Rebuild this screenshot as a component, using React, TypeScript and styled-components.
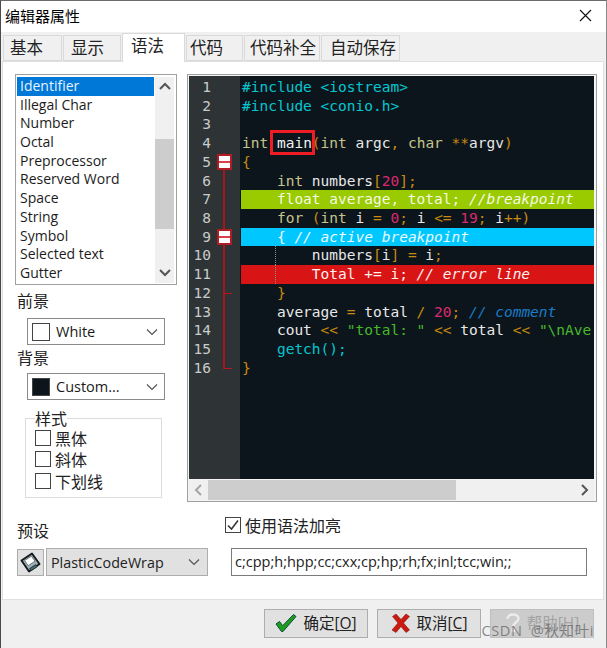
import React from "react";
import styled, { createGlobalStyle } from "styled-components";

const Global = createGlobalStyle`
  html, body { margin: 0; padding: 0; background: #fff; }
  * { box-sizing: border-box; }
`;

const UI_FONT = `"Open Sans", "Noto Sans", "Noto Sans CJK SC", sans-serif`;
const CJK_FONT = `"Noto Sans CJK SC", "Noto Sans", sans-serif`;

const Window = styled.div`
  width: 607px;
  height: 648px;
  display: flex;
  flex-direction: column;
  background: #f0f0f0;
  font-family: ${UI_FONT};
  color: #1a1a1a;
  border-left: 1px solid #4a4a4a;
  border-right: 1px solid #8a8a8a;
  border-top: 1px solid #6a6a6a;
  overflow: hidden;
  position: relative;
`;
const TitleBar = styled.div`
  height: 31px;
  flex: none;
  background: #fff;
  display: flex;
  align-items: center;
  justify-content: space-between;
  padding: 0 14px 2px 4px;
  font: 15px ${CJK_FONT};
  color: #000;
`;
const TabStrip = styled.div`
  height: 29px;
  flex: none;
  background: #f0f0f0;
  display: flex;
  align-items: flex-end;
  padding-left: 2px;
  gap: 1px;
`;
const Tab = styled.div<{ $w: number; $pad: number; $active?: boolean }>`
  width: ${(p) => p.$w}px;
  height: ${(p) => (p.$active ? 29 : 26)}px;
  background: ${(p) => (p.$active ? "#fff" : "#f0f0f0")};
  border: 1px solid #d9d9d9;
  border-bottom: ${(p) => (p.$active ? "none" : "1px solid #d9d9d9")};
  display: flex;
  align-items: center;
  padding: 0 0 ${(p) => (p.$active ? 7 : 3)}px ${(p) => p.$pad}px;
  font: 16.5px ${CJK_FONT};
  color: #222;
  white-space: nowrap;
  margin-bottom: ${(p) => (p.$active ? -1 : 0)}px;
  position: relative;
  z-index: ${(p) => (p.$active ? 1 : 0)};
`;
const Panel = styled.div`
  width: 602px;
  height: 539px;
  flex: none;
  margin-left: 1px;
  background: #fff;
  border: 1px solid #e0e0e0;
  padding: 12px 6px 0 12px;
  display: grid;
  grid-template-columns: 162px 410px;
  column-gap: 10px;
  grid-template-rows: 428px auto;
`;
const LeftColumn = styled.div`
  display: flex;
  flex-direction: column;
`;
const ListFrame = styled.div`
  width: 162px;
  height: 211px;
  flex: none;
  border: 1px solid #a0a0a0;
  display: flex;
  padding: 2px 2px 1px 1px;
`;
const ListItems = styled.div`
  width: 137px;
  flex: none;
  overflow: hidden;
`;
const ListItem = styled.div<{ $selected?: boolean }>`
  height: 18.7px;
  line-height: 18.7px;
  font-size: 14px;
  padding-left: 3px;
  color: ${(p) => (p.$selected ? "#e8f2ff" : "#1c1c1c")};
  background: ${(p) => (p.$selected ? "#0078d7" : "transparent")};
  white-space: nowrap;
`;
const VScroll = styled.div`
  width: 19px;
  margin-left: 1px;
  background: #f0f0f0;
  display: flex;
  flex-direction: column;
  align-items: stretch;
`;
const ScrollArrow = styled.div`
  flex: none;
  display: flex;
  align-items: center;
  justify-content: center;
  width: 19px;
  height: 20px;
`;
const VSpacer = styled.div<{ $h: number }>`
  height: ${(p) => p.$h}px;
  flex: none;
`;
const VThumb = styled.div`
  height: 90px;
  flex: none;
  background: #cdcdcd;
`;
const FieldLabel = styled.div<{ $top: number }>`
  font: 16px/20px ${CJK_FONT};
  margin-top: ${(p) => p.$top}px;
  margin-left: 2px;
  color: #222;
`;
const ColorSelect = styled.div<{ $top: number }>`
  width: 138px;
  height: 27px;
  margin: ${(p) => p.$top}px 0 0 12px;
  border: 1px solid #8a8a8a;
  background: #fff;
  display: flex;
  align-items: center;
  padding: 0 6px 0 4px;
  font-size: 14.5px;
  gap: 6px;
`;
const Swatch = styled.span<{ $c: string }>`
  width: 18px;
  height: 18px;
  flex: none;
  background: ${(p) => p.$c};
  border: 1px solid #444;
`;
const Grow = styled.span`
  flex: 1;
`;
const GroupBox = styled.fieldset`
  width: 137px;
  height: 87px;
  margin: 11px 0 0 10px;
  padding: 1px 0 0 9px;
  border: 1px solid #dcdcdc;
  position: relative;
`;
const GroupTitle = styled.legend`
  font: 16px/15px ${CJK_FONT};
  padding: 0;
  background: #fff;
  color: #222;
  height: 15px;
`;
const CheckRow = styled.div`
  display: flex;
  align-items: center;
  gap: 4px;
  height: 21.5px;
  font: 16px/20px ${CJK_FONT};
  color: #222;
`;
const CheckBox = styled.span`
  width: 16px;
  height: 16px;
  flex: none;
  border: 1px solid #444;
  background: #fff;
  display: flex;
  align-items: center;
  justify-content: center;
`;
const EditorFrame = styled.div`
  width: 410px;
  height: 428px;
  border: 1px solid #a0a0a0;
  padding: 1px 2px 1px 1px;
  display: flex;
  flex-direction: column;
  background: #f4f4f4;
`;
const CodeArea = styled.div`
  height: 403px;
  flex: none;
  background: #0c151c;
  padding-top: 2px;
  overflow: hidden;
  position: relative;
  display: flex;
  flex-direction: column;
`;
const GutterFill = styled.div`
  flex: 1;
  width: 51px;
  background: #2e3436;
`;
const GutterCap = styled.div`
  position: absolute;
  left: 0;
  top: 0;
  width: 51px;
  height: 2px;
  background: #2e3436;
`;
const CodeRow = styled.div`
  display: flex;
  height: 18.73px;
  flex: none;
`;
const Gutter = styled.div`
  width: 51px;
  flex: none;
  background: #2e3436;
  display: flex;
  font: 14.5px/18.73px "DejaVu Sans Mono", monospace;
  color: #c9cccc;
`;
const LineNo = styled.span`
  width: 22px;
  text-align: right;
  flex: none;
`;
const FoldCell = styled.span`
  width: 29px;
  position: relative;
  flex: none;
`;
const FoldBox = styled.span`
  position: absolute;
  left: 6px;
  top: 1px;
  width: 15px;
  height: 16px;
  background: #fff;
  border: 2px solid #b01c24;
  z-index: 1;
  &::after {
    content: "";
    position: absolute;
    left: 0;
    right: 0;
    top: 5px;
    height: 2px;
    background: #d8404a;
  }
`;
const FoldLine = styled.span<{ $half?: boolean }>`
  position: absolute;
  left: 12px;
  top: 0;
  width: 2px;
  height: ${(p) => (p.$half ? "10px" : "100%")};
  background: #a8141c;
`;
const FoldTick = styled.span`
  position: absolute;
  left: 13px;
  top: 9px;
  width: 8px;
  height: 1px;
  background: #b8161e;
`;
const CodeText = styled.div<{ $bg?: string }>`
  flex: 1;
  margin-left: 1px;
  padding-left: 1px;
  white-space: pre;
  font: 14.5px/18.73px "DejaVu Sans Mono", monospace;
  background: ${(p) => p.$bg ?? "transparent"};
  color: #e8e8e8;
  position: relative;
  overflow: hidden;
`;
const CodeTextOpen = styled(CodeText)`
  overflow: visible;
`;
const Guide = styled.span`
  position: absolute;
  left: 34px;
  top: 0;
  bottom: 0;
  border-left: 1px dotted #8a8f92;
`;
const MainWord = styled.span`
  position: relative;
  color: #f2f2f2;
`;
const RedBox = styled.span`
  position: absolute;
  left: -7px;
  top: -5px;
  width: 45px;
  height: 25px;
  border: 3px solid #ee1c25;
  pointer-events: none;
  z-index: 3;
`;
const Tok = styled.span<{ $c: string; $i?: boolean }>`
  color: ${(p) => p.$c};
  font-style: ${(p) => (p.$i ? "italic" : "normal")};
`;
const HScroll = styled.div`
  height: 20px;
  flex: none;
  background: #f0f0f0;
  display: flex;
  margin-top: 1px;
`;
const HThumb = styled.div`
  width: 248px;
  background: #cdcdcd;
`;
const BottomGrid = styled.div`
  grid-column: 1 / 3;
  display: grid;
  grid-template-columns: 216px 1fr;
  padding-top: 14px;
`;
const PresetCol = styled.div`
  display: flex;
  flex-direction: column;
  padding-left: 2px;
`;
const PresetLabel = styled.div`
  font: 16px/20px ${CJK_FONT};
  color: #222;
  margin-top: 4px;
  height: 28px;
`;
const PresetRow = styled.div`
  display: flex;
  gap: 2px;
`;
const IconBtn = styled.div`
  width: 27px;
  height: 27px;
  background: #e1e1e1;
  border: 1px solid #adadad;
  display: flex;
  align-items: center;
  justify-content: center;
  margin-top: 1px;
`;
const PresetSelect = styled.div`
  width: 162px;
  height: 28px;
  background: #e1e1e1;
  border: 1px solid #adadad;
  display: flex;
  align-items: center;
  padding: 0 7px 0 4px;
  font-size: 14.3px;
  color: #222;
`;
const RightCol = styled.div`
  display: flex;
  flex-direction: column;
`;
const HighlightRow = styled.div`
  display: flex;
  align-items: center;
  gap: 4px;
  height: 20px;
  font: 16px/20px ${CJK_FONT};
  color: #222;
  margin-left: -6px;
  margin-top: -1px;
`;
const ExtInput = styled.div`
  width: 356px;
  height: 28px;
  margin-top: 13px;
  border: 1px solid #7a7a7a;
  background: #fff;
  font-size: 14.5px;
  line-height: 26px;
  padding-left: 3px;
  color: #222;
  white-space: nowrap;
`;
const Footer = styled.div`
  flex: 1;
  display: flex;
  justify-content: flex-end;
  gap: 9px;
  padding: 9px 12px 0 0;
  background: #f0f0f0;
`;
const FootButton = styled.div<{ $disabled?: boolean }>`
  width: 104px;
  height: 29px;
  background: ${(p) => (p.$disabled ? "#cccccc" : "#e1e1e1")};
  border: 1px solid ${(p) => (p.$disabled ? "#bfbfbf" : "#adadad")};
  display: flex;
  align-items: center;
  justify-content: center;
  gap: 6px;
  padding-bottom: 2px;
  font: 15.5px ${UI_FONT};
  color: ${(p) => (p.$disabled ? "#a2a2a2" : "#222")};
  white-space: pre;
`;
const Watermark = styled.div`
  position: absolute;
  right: 12px;
  bottom: 8px;
  font: 14.5px ${UI_FONT};
  letter-spacing: 0.6px;
  word-spacing: 4px;
  color: rgba(100, 100, 100, 0.75);
  white-space: nowrap;
`;

const KW = "#c6c48a";
const OR = "#c88a10";
const NUM = "#dc2a6e";
const CY = "#06c6d0";
const GR = "#46b82a";
const BL = "#1a7cc4";

const Chevron = ({ dir }: { dir: "up" | "down" | "left" | "right" }) => {
  const d = { up: "M1 8l5-5 5 5", down: "M1 3l5 5 5-5", left: "M8 1L3 6l5 5", right: "M3 1l5 5-5 5" }[dir];
  return (
    <svg width="12" height="12" viewBox="0 0 12 12" fill="none" stroke={dir === "left" ? "#a6a6a6" : "#555"} strokeWidth="2">
      <path d={d} />
    </svg>
  );
};
const ComboArrow = () => (
  <svg width="12" height="8" viewBox="0 0 12 8" fill="none" stroke="#555" strokeWidth="1.2">
    <path d="M1 1.5l5 5 5-5" />
  </svg>
);
const CheckMark = () => (
  <svg width="14" height="14" viewBox="0 0 14 14" fill="none" stroke="#333" strokeWidth="1.5">
    <path d="M2 7.5l3.5 3.5L12 2.5" />
  </svg>
);
const Floppy = () => (
  <svg width="21" height="21" viewBox="0 0 21 21">
    <path d="M1.5 8.5L12 1.5l7.5 10.5L9 19.5z" fill="#9fb0b6" stroke="#14191c" strokeWidth="1.9" strokeLinejoin="round" />
    <path d="M4.6 8.6l6.8-4.4 3.6 5-6.8 4.4z" fill="#fff" stroke="#4c565c" strokeWidth="0.7" />
    <path d="M9.6 16.6l6-4 1.6 2.1-6 4z" fill="#46666e" stroke="#1c2a30" strokeWidth="0.8" />
  </svg>
);
const GreenCheck = () => (
  <svg width="22" height="20" viewBox="0 0 22 20">
    <path d="M1 11l3.5-2.5 3.2 4.2L18.5 1.5 21 3.5 8 18.5h-1.5z" fill="#1d9e1d" stroke="#0b4a3a" strokeWidth="1" />
  </svg>
);
const RedX = () => (
  <svg width="20" height="20" viewBox="0 0 20 20">
    <path d="M1.5 3.5L5 1l5 5.5L15 1l3.5 2.5L12.5 10l6 7-3.5 2.5-5-6-5 6L1 17l6-7z" fill="#cc1a10" stroke="#7a1a10" strokeWidth="0.6" />
  </svg>
);
const GhostHelp = () => (
  <svg width="16" height="20" viewBox="0 0 16 20" fill="none" stroke="#ececec" strokeWidth="2.4">
    <path d="M2.5 6C2.5 3 5 1.5 8 1.5s5.5 1.5 5.5 4.2c0 3.4-5 3.6-5 7.3" />
    <circle cx="8.5" cy="17" r="1.2" />
  </svg>
);

type Row = { fold?: "box" | "line" | "tick" | "end"; bg?: string; guide?: boolean; code: React.ReactNode };

const rows: Row[] = [
  { code: <Tok $c={CY}>#include &lt;iostream&gt;</Tok> },
  { code: <Tok $c={CY}>#include &lt;conio.h&gt;</Tok> },
  { code: " " },
  {
    code: (
      <>
        <Tok $c={KW}>int</Tok>{" "}
        <MainWord>
          main
          <RedBox />
        </MainWord>
        <Tok $c={OR}>(</Tok>
        <Tok $c={KW}>int</Tok> argc<Tok $c={OR}>,</Tok> <Tok $c={KW}>char</Tok> <Tok $c={OR}>**</Tok>argv
        <Tok $c={OR}>)</Tok>
      </>
    ),
  },
  { fold: "box", code: <Tok $c={OR}>{"{"}</Tok> },
  {
    fold: "line",
    code: (
      <>
        {"    "}
        <Tok $c={KW}>int</Tok> numbers<Tok $c={OR}>[</Tok>
        <Tok $c={NUM}>20</Tok>
        <Tok $c={OR}>];</Tok>
      </>
    ),
  },
  {
    fold: "line",
    bg: "#9aca00",
    code: (
      <Tok $c="#f4f8e4">
        {"    float average, total; "}
        <Tok $c="#f4f8e4" $i>//breakpoint</Tok>
      </Tok>
    ),
  },
  {
    fold: "line",
    code: (
      <>
        {"    "}
        <Tok $c={KW}>for</Tok> <Tok $c={OR}>(</Tok>
        <Tok $c={KW}>int</Tok> i <Tok $c={OR}>=</Tok> <Tok $c={NUM}>0</Tok>
        <Tok $c={OR}>;</Tok> i <Tok $c={OR}>&lt;=</Tok> <Tok $c={NUM}>19</Tok>
        <Tok $c={OR}>;</Tok> i<Tok $c={OR}>++)</Tok>
      </>
    ),
  },
  {
    fold: "box",
    bg: "#00c8ff",
    code: (
      <Tok $c="#eafaff">
        {"    { "}
        <Tok $c="#eafaff" $i>// active breakpoint</Tok>
      </Tok>
    ),
  },
  {
    fold: "line",
    guide: true,
    code: (
      <>
        {"        numbers"}
        <Tok $c={OR}>[</Tok>i<Tok $c={OR}>]</Tok> <Tok $c={OR}>=</Tok> i<Tok $c={OR}>;</Tok>
      </>
    ),
  },
  {
    fold: "line",
    guide: true,
    bg: "#d81414",
    code: (
      <Tok $c="#fff0f0">
        {"        Total += i; "}
        <Tok $c="#fff0f0" $i>// error line</Tok>
      </Tok>
    ),
  },
  { fold: "tick", code: <>{"    "}<Tok $c={OR}>{"}"}</Tok></> },
  {
    fold: "line",
    code: (
      <>
        {"    average "}
        <Tok $c={OR}>=</Tok> total <Tok $c={OR}>/</Tok> <Tok $c={NUM}>20</Tok>
        <Tok $c={OR}>;</Tok> <Tok $c={BL} $i>// comment</Tok>
      </>
    ),
  },
  {
    fold: "line",
    code: (
      <>
        {"    cout "}
        <Tok $c={OR}>&lt;&lt;</Tok> <Tok $c={GR}>"total: "</Tok> <Tok $c={OR}>&lt;&lt;</Tok> total{" "}
        <Tok $c={OR}>&lt;&lt;</Tok> <Tok $c={GR}>"\nAve</Tok>
      </>
    ),
  },
  { fold: "line", code: <>{"    "}<Tok $c={CY}>getch();</Tok></> },
  { fold: "end", code: <Tok $c={OR}>{"}"}</Tok> },
];

const listItems = ["Identifier", "Illegal Char", "Number", "Octal", "Preprocessor", "Reserved Word", "Space", "String", "Symbol", "Selected text", "Gutter"];
const tabs: { t: string; w: number; pad: number; a?: boolean }[] = [
  { t: "基本", w: 59, pad: 6 },
  { t: "显示", w: 58, pad: 7 },
  { t: "语法", w: 63, pad: 8, a: true },
  { t: "代码", w: 57, pad: 3 },
  { t: "代码补全", w: 76, pad: 5 },
  { t: "自动保存", w: 79, pad: 8 },
];

export default function App() {
  return (
    <Window>
      <Global />
      <TitleBar>
        <span>编辑器属性</span>
        <svg width="13" height="13" viewBox="0 0 13 13" stroke="#111" strokeWidth="1.1">
          <path d="M1 1l11 11M12 1L1 12" />
        </svg>
      </TitleBar>
      <TabStrip>
        {tabs.map((x) => (
          <Tab key={x.t} $w={x.w} $pad={x.pad} $active={x.a}>{x.t}</Tab>
        ))}
      </TabStrip>
      <Panel>
        <LeftColumn>
          <ListFrame>
            <ListItems>
              {listItems.map((l, i) => (
                <ListItem key={l} $selected={i === 0}>{l}</ListItem>
              ))}
            </ListItems>
            <VScroll>
              <ScrollArrow><Chevron dir="up" /></ScrollArrow>
              <VSpacer $h={42} />
              <VThumb />
              <Grow />
              <ScrollArrow><Chevron dir="down" /></ScrollArrow>
            </VScroll>
          </ListFrame>
          <FieldLabel $top={5}>前景</FieldLabel>
          <ColorSelect $top={8}>
            <Swatch $c="#fff" />
            <span>White</span>
            <Grow />
            <ComboArrow />
          </ColorSelect>
          <FieldLabel $top={2}>背景</FieldLabel>
          <ColorSelect $top={6}>
            <Swatch $c="#0c151c" />
            <span>Custom...</span>
            <Grow />
            <ComboArrow />
          </ColorSelect>
          <GroupBox>
            <GroupTitle>样式</GroupTitle>
            <CheckRow><CheckBox />黑体</CheckRow>
            <CheckRow><CheckBox />斜体</CheckRow>
            <CheckRow><CheckBox />下划线</CheckRow>
          </GroupBox>
        </LeftColumn>
        <EditorFrame>
          <CodeArea>
            <GutterCap />
            {rows.map((r, i) => {
              const Text = i === 3 ? CodeTextOpen : CodeText;
              return (
                <CodeRow key={i}>
                  <Gutter>
                    <LineNo>{i + 1}</LineNo>
                    <FoldCell>
                      {(r.fold === "line" || r.fold === "box" || r.fold === "tick") && <FoldLine />}
                      {r.fold === "end" && <FoldLine $half />}
                      {(r.fold === "tick" || r.fold === "end") && <FoldTick />}
                      {r.fold === "box" && <FoldBox />}
                    </FoldCell>
                  </Gutter>
                  <Text $bg={r.bg}>
                    {r.guide && <Guide />}
                    {r.code}
                  </Text>
                </CodeRow>
              );
            })}
            <GutterFill />
          </CodeArea>
          <HScroll>
            <ScrollArrow><Chevron dir="left" /></ScrollArrow>
            <HThumb />
            <Grow />
            <ScrollArrow><Chevron dir="right" /></ScrollArrow>
          </HScroll>
        </EditorFrame>
        <BottomGrid>
          <PresetCol>
            <PresetLabel>预设</PresetLabel>
            <PresetRow>
              <IconBtn><Floppy /></IconBtn>
              <PresetSelect>
                <span>PlasticCodeWrap</span>
                <Grow />
                <ComboArrow />
              </PresetSelect>
            </PresetRow>
          </PresetCol>
          <RightCol>
            <HighlightRow>
              <CheckBox><CheckMark /></CheckBox>
              使用语法加亮
            </HighlightRow>
            <ExtInput>c;cpp;h;hpp;cc;cxx;cp;hp;rh;fx;inl;tcc;win;;</ExtInput>
          </RightCol>
        </BottomGrid>
      </Panel>
      <Footer>
        <FootButton><GreenCheck /><span>确定[<u>O</u>]</span></FootButton>
        <FootButton><RedX /><span>取消[<u>C</u>]</span></FootButton>
        <FootButton $disabled><GhostHelp /><span>帮助[H]</span></FootButton>
      </Footer>
      <Watermark>CSDN @秋知叶i</Watermark>
    </Window>
  );
}
